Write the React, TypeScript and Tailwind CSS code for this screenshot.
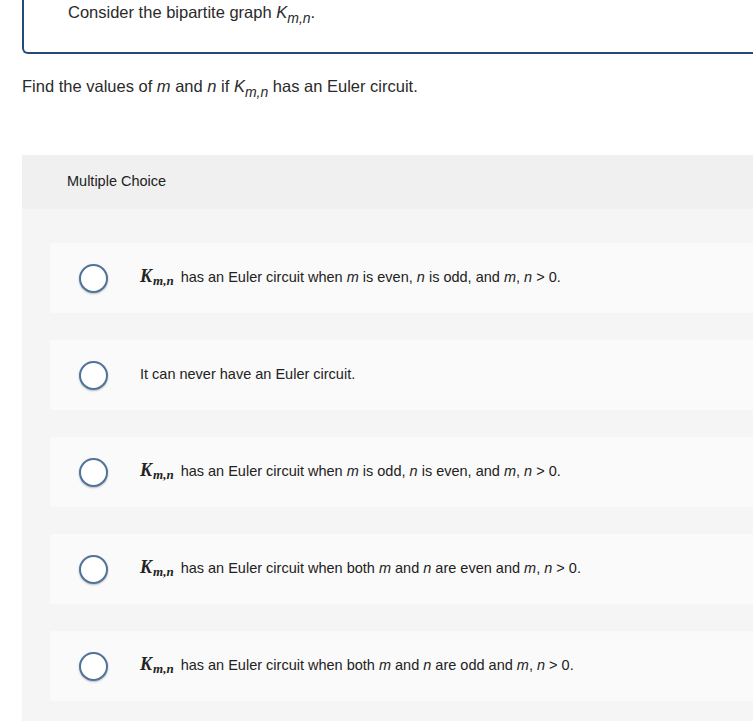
import React from "react";

const sans = { fontFamily: "'Liberation Sans', Arial, sans-serif" };

function K({ serif = false }: { serif?: boolean }) {
    if (serif) {
        return (
            <span className="italic font-semibold text-[18px] leading-none text-[#222] mr-[3px]" style={{ fontFamily: "'Liberation Serif', 'DejaVu Serif', serif" }}>
                K<span className="relative top-[3px] text-[13px] leading-none ml-[1px]">m,n</span>
            </span>
        );
    }
    return (
        <span className="italic">
            K<span className="relative top-[5px] text-[14px] leading-none">m,n</span>
        </span>
    );
}

const options: React.ReactNode[] = [
    <>
        <K serif /> has an Euler circuit when <i>m</i> is even, <i>n</i> is odd, and <i>m</i>, <i>n</i> &gt; 0.
    </>,
    <>It can never have an Euler circuit.</>,
    <>
        <K serif /> has an Euler circuit when <i>m</i> is odd, <i>n</i> is even, and <i>m</i>, <i>n</i> &gt; 0.
    </>,
    <>
        <K serif /> has an Euler circuit when both <i>m</i> and <i>n</i> are even and <i>m</i>, <i>n</i> &gt; 0.
    </>,
    <>
        <K serif /> has an Euler circuit when both <i>m</i> and <i>n</i> are odd and <i>m</i>, <i>n</i> &gt; 0.
    </>,
];

export default function App() {
    return (
        <div className="w-[753px] h-[721px] overflow-hidden bg-white text-[#222]" style={sans}>
            <div className="w-[800px]">
                {/* question stem box, top edge cut off */}
                <div className="ml-[22px] h-[54px] border-l-2 border-b-2 border-[#24497a] rounded-bl-[6px] pl-[44px]">
                    <p className="text-[16.5px] leading-[24px] text-[#2a2a2a]">
                        Consider the bipartite graph <K />.
                    </p>
                </div>

                <p className="ml-[22px] mt-[20px] text-[16.5px] leading-[24px] text-[#2a2a2a]">
                    Find the values of <i>m</i> and <i>n</i> if <K /> has an Euler circuit.
                </p>

                <div className="ml-[22px] mt-[57px] bg-[#f5f5f5] pb-[40px]">
                    <div className="h-[54px] bg-[#f0f0f0] flex items-center pl-[45px]">
                        <span className="text-[14.5px] text-[#222]">Multiple Choice</span>
                    </div>
                    <div className="pt-[34px] pl-[28px] flex flex-col gap-[27px]">
                        {options.map((opt, i) => (
                            <div key={i} className="h-[70px] bg-[#fafafa] rounded-[3px] flex items-center pl-[29px]">
                                <span className="w-[29px] h-[29px] shrink-0 rounded-full border-2 border-[#50739b] bg-white shadow-[0_1px_2px_rgba(0,0,0,0.25)]" />
                                <span className="ml-[32px] text-[14.5px] text-[#222]">{opt}</span>
                            </div>
                        ))}
                    </div>
                </div>
            </div>
        </div>
    );
}
